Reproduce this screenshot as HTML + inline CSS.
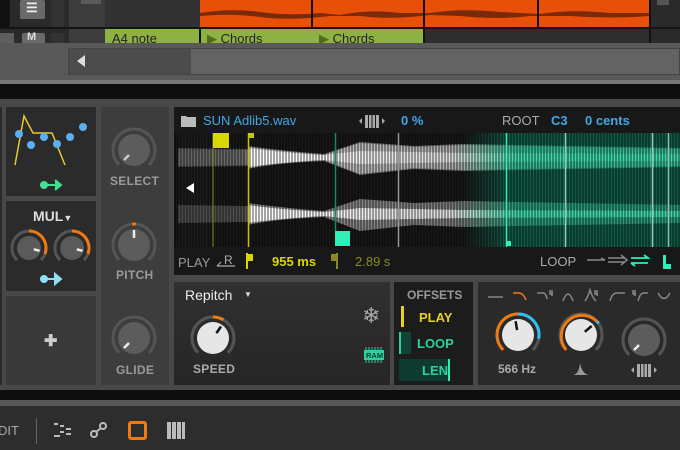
<!DOCTYPE html>
<html><head><meta charset="utf-8"><style>
*{margin:0;padding:0;box-sizing:border-box}
body{width:680px;height:450px;overflow:hidden;background:#464646;font-family:"Liberation Sans",sans-serif;position:relative}
.a{position:absolute}
.t{position:absolute;white-space:nowrap;font-weight:bold}
.lbl{font-size:12px;color:#9a9a9a;font-weight:bold;letter-spacing:.3px}
</style></head><body>
<!-- top tracks -->
<div class="a" style="left:0;top:0;width:680px;height:44px;background:#2a2a2a"></div>
<div class="a" style="left:0;top:0;width:10px;height:27px;background:#111"></div>
<div class="a" style="left:20px;top:0;width:25px;height:19px;background:#6a6a6a;border-radius:2px"></div>
<div class="t" style="left:26px;top:0px;color:#eee;font-size:13px">☰</div>
<div class="a" style="left:51px;top:0;width:13px;height:27px;background:#333"></div>
<div class="a" style="left:0;top:33px;width:14px;height:11px;background:#5e5e5e"></div>
<div class="a" style="left:22px;top:33px;width:23px;height:11px;background:#6a6a6a;border-radius:2px"></div>
<div class="t" style="left:27px;top:31px;color:#ddd;font-size:11px">M</div>
<div class="a" style="left:51px;top:33px;width:13px;height:11px;background:#333"></div>
<div class="a" style="left:69px;top:0;width:36px;height:44px;background:#3c3c3c"></div>
<div class="a" style="left:81px;top:0;width:20px;height:4px;background:#5a5a5a"></div>
<div class="a" style="left:105px;top:0;width:95px;height:27px;background:#323232"></div>
<div class="a" style="left:200px;top:0;width:450px;height:27px;background:#e8500a"></div>
<svg class="a" style="left:200px;top:0" width="450" height="27"><path d="M0 13 Q30 8 60 12 T120 13 L140 15 Q170 9 200 13 L230 13 Q260 8 300 12 L340 14 Q370 9 410 13 L450 13 L450 16 Q410 19 370 16 L330 16 Q300 20 260 16 L230 15 Q190 20 160 16 L130 16 Q90 21 60 17 T0 16Z" fill="#7a2a08"/></svg>
<div class="a" style="left:311px;top:0;width:2px;height:44px;background:#111"></div>
<div class="a" style="left:423px;top:0;width:2px;height:44px;background:#111"></div>
<div class="a" style="left:537px;top:0;width:2px;height:27px;background:#111"></div>
<div class="a" style="left:649px;top:0;width:2px;height:44px;background:#111"></div>
<div class="a" style="left:657px;top:0;width:12px;height:5px;background:#555"></div>
<div class="a" style="left:0;top:27px;width:680px;height:2px;background:#151515"></div>
<div class="a" style="left:105px;top:29px;width:318px;height:15px;background:#8fb043"></div>
<div class="a" style="left:199px;top:29px;width:2px;height:15px;background:#111"></div>
<div class="t" style="left:112px;top:31px;color:#222;font-size:13px;font-weight:normal">A4 note</div>
<div class="t" style="left:207px;top:31px;color:#222;font-size:13px;font-weight:normal"><span style="color:#4f6b20">▶</span> Chords</div>
<div class="t" style="left:319px;top:31px;color:#222;font-size:13px;font-weight:normal"><span style="color:#4f6b20">▶</span> Chords</div>
<div class="a" style="left:425px;top:29px;width:224px;height:15px;background:#2e2e2e"></div>
<!-- scroll panel -->
<div class="a" style="left:0;top:43px;width:680px;height:37px;background:#595959"></div>
<div class="a" style="left:68px;top:48px;width:612px;height:27px;background:#636363;border:1px solid #444"></div>
<div class="a" style="left:69px;top:49px;width:122px;height:25px;background:#4c4c4c"></div>
<div class="a" style="left:77px;top:55px;width:0;height:0;border-top:6px solid transparent;border-bottom:6px solid transparent;border-right:8px solid #ddd"></div>
<div class="a" style="left:0;top:80px;width:680px;height:4px;background:#777"></div>
<div class="a" style="left:0;top:84px;width:680px;height:15px;background:#0e0e0e"></div>
<!-- device area -->
<div class="a" style="left:0;top:99px;width:680px;height:291px;background:#484848"></div>
<div class="a" style="left:0;top:107px;width:2px;height:278px;background:#2a2a2a"></div>
<div class="a" style="left:6px;top:107px;width:90px;height:89px;background:#2b2b2b"></div>
<div class="a" style="left:6px;top:201px;width:90px;height:90px;background:#2b2b2b"></div>
<div class="a" style="left:6px;top:296px;width:90px;height:89px;background:#393939"></div>
<div class="a" style="left:101px;top:107px;width:68px;height:278px;background:#3d3d3d"></div>
<svg class="a" style="left:0;top:100px" width="100" height="100">
<path d="M15 65 L24 16 L33 33 L52 33 L65 65" fill="none" stroke="#e8c830" stroke-width="1.5"/>
<g fill="#5ab0f0"><circle cx="19" cy="34" r="4"/><circle cx="31" cy="45" r="4"/><circle cx="44" cy="37" r="4"/><circle cx="57" cy="44" r="4"/><circle cx="70" cy="37" r="4"/><circle cx="83" cy="27" r="4"/></g>
<circle cx="44" cy="85" r="4" fill="#3fe090"/><path d="M44 85 H60 M55 80 L61 85 L55 90" stroke="#3fe090" stroke-width="2" fill="#3fe090"/>
</svg>
<div class="t" style="left:33px;top:208px;color:#ddd;font-size:14px">MUL<span style="font-size:9px">▼</span></div>
<svg class="a" style="left:9px;top:228px" width="40" height="40"><path d="M7.98 32.02 A17 17 0 1 1 32.02 32.02" fill="none" stroke="#555" stroke-width="3"/><path d="M20 3 A17 17 0 0 1 35.97 25.81" fill="none" stroke="#f07a10" stroke-width="3"/><circle cx="20" cy="20" r="12" fill="#5a5a5a"/><path d="M24.8 21.3 L30.6 22.8" stroke="#eee" stroke-width="2.5"/></svg>
<svg class="a" style="left:52px;top:228px" width="40" height="40"><path d="M7.98 32.02 A17 17 0 1 1 32.02 32.02" fill="none" stroke="#555" stroke-width="3"/><path d="M20 3 A17 17 0 0 1 35.97 25.81" fill="none" stroke="#f07a10" stroke-width="3"/><circle cx="20" cy="20" r="12" fill="#5a5a5a"/><path d="M24.8 21.3 L30.6 22.8" stroke="#eee" stroke-width="2.5"/></svg>
<svg class="a" style="left:38px;top:272px" width="30" height="14"><circle cx="6" cy="7" r="4" fill="#8de0f8"/><path d="M6 7 H22 M17 2 L23 7 L17 12Z" stroke="#8de0f8" stroke-width="2" fill="#8de0f8"/></svg>
<div class="t" style="left:44px;top:331px;color:#ccc;font-size:16px">✚</div>
<!-- col2 knobs -->
<svg class="a" style="left:109px;top:125px" width="50" height="50"><path d="M10.15 39.85 A21 21 0 1 1 39.85 39.85" fill="none" stroke="#555" stroke-width="3"/><circle cx="25" cy="25" r="16" fill="#5c5c5c"/><path d="M20 30 L15 35" stroke="#ccc" stroke-width="2.5"/></svg>
<div class="t lbl" style="left:110px;top:174px">SELECT</div>
<svg class="a" style="left:109px;top:220px" width="50" height="50"><path d="M10.15 39.85 A21 21 0 1 1 39.85 39.85" fill="none" stroke="#555" stroke-width="3"/><path d="M23.2 4.1 A21 21 0 0 1 26.8 4.1" fill="none" stroke="#f07a10" stroke-width="3"/><circle cx="25" cy="25" r="16" fill="#5c5c5c"/><path d="M25 18 L25 10" stroke="#eee" stroke-width="2.5"/></svg>
<div class="t lbl" style="left:116px;top:268px">PITCH</div>
<svg class="a" style="left:109px;top:313px" width="50" height="50"><path d="M10.15 39.85 A21 21 0 1 1 39.85 39.85" fill="none" stroke="#555" stroke-width="3"/><circle cx="25" cy="25" r="16" fill="#5c5c5c"/><path d="M20 30 L15 35" stroke="#eee" stroke-width="2.5"/></svg>
<div class="t lbl" style="left:116px;top:363px">GLIDE</div>
<!-- sample panel -->
<div class="a" style="left:174px;top:107px;width:506px;height:168px;background:#181818"></div>
<svg class="a" style="left:181px;top:114px" width="15" height="13"><path d="M0 2 H5 L6 3 H15 V13 H0Z" fill="#bbb"/></svg>
<div class="t" style="left:203px;top:113px;color:#3fa9e8;font-size:13px;font-weight:normal">SUN Adlib5.wav</div>
<svg class="a" style="left:356px;top:113px" width="32" height="16"><path d="M3 8 L6 5 V11Z M29 8 L26 5 V11Z" fill="#aaa"/><rect x="9" y="2" width="14" height="13" fill="#aaa"/><g stroke="#181818" stroke-width="1"><path d="M12.5 2 V15 M16 2 V15 M19.5 2 V15"/></g></svg>
<div class="t" style="left:401px;top:113px;color:#3fa9e8;font-size:13px">0 %</div>
<div class="t" style="left:502px;top:113px;color:#aaa;font-size:13px;font-weight:normal">ROOT</div>
<div class="t" style="left:551px;top:113px;color:#3fa9e8;font-size:13px">C3</div>
<div class="t" style="left:585px;top:113px;color:#3fa9e8;font-size:13px">0 cents</div>
<svg class="a" style="left:174px;top:133px" width="506" height="114">
<defs><linearGradient id="tg" x1="0" x2="1"><stop offset="0" stop-color="#115a45" stop-opacity="0"/><stop offset="1" stop-color="#115a45"/></linearGradient>
<linearGradient id="wg" x1="0" x2="506" gradientUnits="userSpaceOnUse"><stop offset="0" stop-color="#777"/><stop offset=".14" stop-color="#888"/><stop offset=".15" stop-color="#fff"/><stop offset=".55" stop-color="#ddd"/><stop offset=".68" stop-color="#3fd8a8"/><stop offset="1" stop-color="#3fd8a8"/></linearGradient>
<pattern id="st" width="3" height="10" patternUnits="userSpaceOnUse"><rect width="2" height="10" fill="#000" opacity=".35"/></pattern></defs>
<rect x="289" y="0" width="45" height="114" fill="url(#tg)"/><rect x="334" y="0" width="172" height="114" fill="#115a45"/>
<rect x="4" y="0" width="30" height="114" fill="#1d1d1d"/>
<g id="ch"><path d="M4 16 L74 17 L74 14 Q100 18 150 22 L186 10 L240 14 L290 12 L506 16 L506 34 L290 38 L240 36 L186 42 L150 28 Q100 30 74 36 L74 33 L4 34Z" fill="url(#wg)" opacity=".5"/><path d="M74 16 Q100 20 150 23 L186 19 L290 21 L506 22 L506 28 L290 29 L186 31 L150 27 Q100 30 74 34Z" fill="url(#wg)"/></g>
<use href="#ch" y="-1"/>
<use href="#ch" y="56"/>
<rect x="0" y="0" width="506" height="114" fill="url(#st)"/>
<path d="M39 0 V114" stroke="#8a8a10" stroke-width="1"/><rect x="39" y="0" width="16" height="15" fill="#d8d800"/>
<path d="M74.5 0 V114" stroke="#c8c800" stroke-width="1.5"/><rect x="74" y="0" width="6" height="5" fill="#c8c800"/>
<path d="M161.5 0 V98" stroke="#148a6a" stroke-width="1.5"/><rect x="161" y="98" width="15" height="15" fill="#2ff0b8"/>
<path d="M224.5 0 V114" stroke="#999" stroke-width="1.5"/>
<path d="M332.5 0 V114" stroke="#2ff0b8" stroke-width="1.5"/><rect x="332" y="108" width="5" height="5" fill="#2ff0b8"/>
<path d="M391.5 0 V114 M478.5 0 V114 M494.5 0 V114" stroke="#8fc8b8" stroke-width="1.5"/>
<path d="M12 55 L20 50 V60Z" fill="#fff"/>
</svg>
<div class="t" style="left:178px;top:255px;color:#999;font-size:13px;font-weight:normal">PLAY</div>
<svg class="a" style="left:215px;top:252px" width="22" height="16"><path d="M2 14 L6 10 M2 14 H20" stroke="#aaa" stroke-width="1.2" fill="none"/><text x="9" y="12" font-size="12" fill="#aaa" font-family="Liberation Sans">R</text></svg>
<svg class="a" style="left:246px;top:253px" width="10" height="16"><path d="M1 0 V16" stroke="#d8d800" stroke-width="2"/><path d="M1 1 H7 V8 H1Z" fill="#d8d800"/></svg>
<div class="t" style="left:272px;top:254px;color:#d8d800;font-size:13px">955 ms</div>
<svg class="a" style="left:330px;top:253px" width="10" height="16"><path d="M7 0 V16" stroke="#8a8a20" stroke-width="2"/><path d="M1 1 H7 V8 H1Z" fill="#8a8a20"/></svg>
<div class="t" style="left:355px;top:254px;color:#8a8a20;font-size:13px;font-weight:normal">2.89 s</div>
<div class="t" style="left:540px;top:254px;color:#aaa;font-size:13px;font-weight:normal">LOOP</div>
<svg class="a" style="left:585px;top:253px" width="92" height="18"><path d="M2 7 H20 L16 5" stroke="#888" stroke-width="1.5" fill="none"/><path d="M23 5 H40 M23 9 H40 M36 2 L42 7 L36 12" stroke="#888" stroke-width="1.5" fill="none"/><path d="M46 5 H63 L59 2 M46 10 H63 M50 13 L46 10" stroke="#2ff0b8" stroke-width="1.8" fill="none"/><path d="M78 2 V16 H86 V11 H81 V2Z" fill="#2ff0b8"/></svg>
<!-- repitch -->
<div class="a" style="left:174px;top:282px;width:216px;height:103px;background:linear-gradient(#303030,#262626)"></div>
<div class="t" style="left:185px;top:287px;color:#eee;font-size:14px;font-weight:normal">Repitch</div>
<div class="t" style="left:244px;top:290px;color:#ddd;font-size:8px">▼</div>
<svg class="a" style="left:188px;top:313px" width="50" height="50"><path d="M10.15 39.85 A21 21 0 1 1 39.85 39.85" fill="none" stroke="#555" stroke-width="3"/><path d="M25 4 A21 21 0 0 1 35.5 6.8" fill="none" stroke="#f07a10" stroke-width="3"/><circle cx="25" cy="25" r="16" fill="#e6e6e6"/><path d="M28.4 20.1 L33 13.5" stroke="#111" stroke-width="2.5"/></svg>
<div class="t lbl" style="left:193px;top:362px;color:#aaa">SPEED</div>
<div class="t" style="left:362px;top:303px;color:#aaa;font-size:22px;font-weight:normal">❄</div>
<svg class="a" style="left:363px;top:346px" width="22" height="18"><path d="M3 1 V17 M6 1 V17 M9 1 V17 M12 1 V17 M15 1 V17 M18 1 V17" stroke="#2fd0a0" stroke-width="1"/><rect x="1" y="4" width="20" height="10" fill="#2fd0a0"/><text x="3" y="12" font-size="7.5" fill="#0a3a2c" font-family="Liberation Sans" font-weight="bold">RAM</text></svg>
<!-- offsets -->
<div class="a" style="left:394px;top:282px;width:79px;height:103px;background:#1c1c1c"></div>
<div class="t" style="left:407px;top:288px;color:#999;font-size:12px">OFFSETS</div>
<div class="a" style="left:401px;top:306px;width:3px;height:21px;background:#e8d020"></div>
<div class="t" style="left:419px;top:310px;color:#e8d020;font-size:13px">PLAY</div>
<div class="a" style="left:399px;top:332px;width:12px;height:22px;background:#0f4436;border-left:2px solid #2fd0a0"></div>
<div class="t" style="left:417px;top:336px;color:#2fd0a0;font-size:13px">LOOP</div>
<div class="a" style="left:399px;top:359px;width:51px;height:22px;background:#0f3a30;border-right:2px solid #2ff0b8"></div>
<div class="t" style="left:422px;top:363px;color:#2fd0a0;font-size:13px">LEN</div>
<!-- filter -->
<div class="a" style="left:478px;top:282px;width:202px;height:103px;background:#2a2a2a"></div>
<svg class="a" style="left:484px;top:287px" width="196" height="18" fill="none" stroke-width="1.5">
<path d="M4 10 H19" stroke="#888"/><path d="M29 6 H35 Q39 6 42 13" stroke="#f07a10"/>
<path d="M53 6 H59 Q62 6 63 12 M66 3 V7 H69 M68 3 V9" stroke="#888"/>
<path d="M79 14 Q84 0 89 14" stroke="#888"/><path d="M101 14 Q104 10 106 3 Q108 10 112 14 M111 3 V7 H114 M113 3 V9" stroke="#888"/>
<path d="M126 14 Q128 6 133 6 H141" stroke="#888"/><path d="M149 3 V7 H152 M151 3 V9 M154 14 Q156 6 160 6 H164" stroke="#888"/><path d="M174 6 Q180 17 186 6" stroke="#888"/></svg>
<svg class="a" style="left:493px;top:310px" width="50" height="50"><path d="M10.15 39.85 A21 21 0 1 1 39.85 39.85" fill="none" stroke="#555" stroke-width="3"/><path d="M10.15 39.85 A21 21 0 0 1 25 4" fill="none" stroke="#f07a10" stroke-width="3"/><path d="M25 4 A21 21 0 0 1 45.68 28.65" fill="none" stroke="#30c0f0" stroke-width="3"/><circle cx="25" cy="25" r="16" fill="#e6e6e6"/><path d="M24.1 20.1 L22.6 11.2" stroke="#111" stroke-width="2.5"/></svg>
<div class="t" style="left:498px;top:362px;color:#aaa;font-size:12px">566 Hz</div>
<svg class="a" style="left:556px;top:310px" width="50" height="50"><path d="M10.15 39.85 A21 21 0 1 1 39.85 39.85" fill="none" stroke="#555" stroke-width="3"/><path d="M10.15 39.85 A21 21 0 0 1 41.09 11.5" fill="none" stroke="#f07a10" stroke-width="3"/><path d="M41.09 11.5 A21 21 0 0 1 42.6 13.6" fill="none" stroke="#30c0f0" stroke-width="3"/><circle cx="25" cy="25" r="16" fill="#e6e6e6"/><path d="M28.8 21.8 L35.7 16" stroke="#111" stroke-width="2.5"/></svg>
<svg class="a" style="left:572px;top:362px" width="18" height="14"><path d="M1 13 Q7 12 8 1 Q10 12 17 13Z" fill="#999"/></svg>
<svg class="a" style="left:619px;top:315px" width="50" height="50"><path d="M10.15 39.85 A21 21 0 1 1 39.85 39.85" fill="none" stroke="#555" stroke-width="3"/><circle cx="25" cy="25" r="16" fill="#5c5c5c"/><path d="M20 30 L15 35" stroke="#eee" stroke-width="2.5"/></svg>
<svg class="a" style="left:628px;top:362px" width="32" height="16"><path d="M3 8 L6 5 V11Z M29 8 L26 5 V11Z" fill="#aaa"/><rect x="9" y="2" width="14" height="13" fill="#aaa"/><path d="M12.5 2 V15 M16 2 V15 M19.5 2 V15" stroke="#2a2a2a" stroke-width="1"/></svg>
<!-- bottom -->
<div class="a" style="left:0;top:390px;width:680px;height:10px;background:#0e0e0e"></div>
<div class="a" style="left:0;top:400px;width:680px;height:6px;background:#585858"></div>
<div class="a" style="left:0;top:406px;width:680px;height:44px;background:#2d2d2d"></div>
<div class="t" style="left:-2px;top:423px;color:#aaa;font-size:13px;font-weight:normal">DIT</div>
<div class="a" style="left:36px;top:418px;width:1px;height:26px;background:#666"></div>
<svg class="a" style="left:52px;top:420px" width="22" height="20" fill="#bbb"><rect x="2" y="3" width="4" height="2"/><rect x="8" y="5" width="4" height="2"/><rect x="14" y="8" width="5" height="2"/><rect x="8" y="11" width="4" height="2"/><rect x="14" y="13" width="5" height="2"/><rect x="2" y="15" width="6" height="2"/></svg>
<svg class="a" style="left:90px;top:421px" width="18" height="18"><circle cx="4" cy="13" r="3" fill="none" stroke="#bbb" stroke-width="2"/><circle cx="13" cy="5" r="3" fill="none" stroke="#bbb" stroke-width="2"/><path d="M6 11 L11 7" stroke="#bbb" stroke-width="2"/></svg>
<div class="a" style="left:128px;top:421px;width:19px;height:19px;border:3px solid #f07a10;border-radius:3px"></div>
<svg class="a" style="left:167px;top:422px" width="18" height="17" fill="#bbb"><rect x="0" y="0" width="4" height="17"/><rect x="5" y="0" width="4" height="17"/><rect x="10" y="0" width="4" height="17"/><rect x="15" y="0" width="3" height="17"/></svg>
</body></html>
